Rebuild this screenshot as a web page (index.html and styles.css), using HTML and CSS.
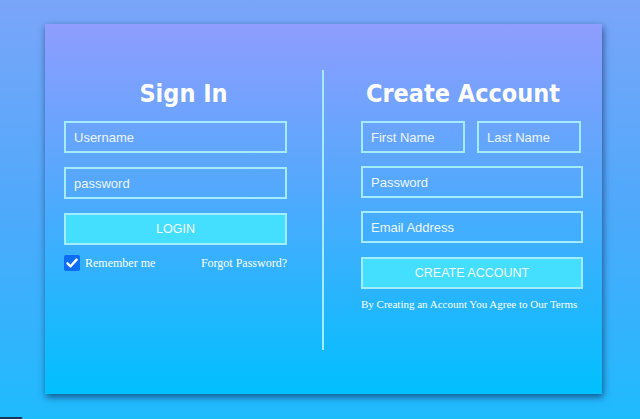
FILE: index.html
```html
<!DOCTYPE html>
<html lang="en">
<head>
<meta charset="utf-8">
<title>Sign In / Create Account</title>
<link rel="stylesheet" href="styles.css">
</head>
<body>
<div class="card">
  <section class="col col-left">
    <h2 class="title">Sign In</h2>
    <div class="form">
      <input class="field" type="text" placeholder="Username">
      <input class="field gap-l" type="password" placeholder="password">
      <button class="btn gap-l" type="button">LOGIN</button>
      <div class="row-opts">
        <label class="remember">
          <span class="check"><svg viewBox="0 0 16 16" width="16" height="16"><path d="M3.5 8.3 L6.6 11.3 L12.6 4.6" fill="none" stroke="#fff" stroke-width="2.4" stroke-linecap="round" stroke-linejoin="round"/></svg></span>
          <span>Remember me</span>
        </label>
        <span class="forgot">Forgot Password?</span>
      </div>
    </div>
  </section>
  <div class="divider"></div>
  <section class="col col-right">
    <h2 class="title">Create Account</h2>
    <div class="form">
      <div class="name-row">
        <input class="field" type="text" placeholder="First Name">
        <input class="field" type="text" placeholder="Last Name">
      </div>
      <input class="field gap-r" type="password" placeholder="Password">
      <input class="field gap-r" type="email" placeholder="Email Address">
      <button class="btn gap-rb" type="button">CREATE ACCOUNT</button>
      <p class="terms">By Creating an Account You Agree to Our Terms</p>
    </div>
  </section>
</div>
<div class="corner-bar"></div>
</body>
</html>
```

FILE: styles.css
```css
html, body {
  margin: 0;
  padding: 0;
}
body {
  width: 640px;
  height: 419px;
  overflow: hidden;
  background: linear-gradient(180deg, #7aa5f9 0%, #4fa9fb 50%, #1ebbfd 100%);
  font-family: "Liberation Sans", Arial, sans-serif;
}
.card {
  box-sizing: border-box;
  margin: 24px 0 0 45px;
  width: 557px;
  height: 370px;
  display: flex;
  align-items: flex-start;
  background: linear-gradient(180deg, #8f9dfe 0%, #52a9fd 45%, #00c0fe 100%);
  box-shadow: 1px 3px 7px rgba(10, 30, 80, 0.65);
}
.col {
  box-sizing: border-box;
  display: flex;
  flex-direction: column;
  padding-top: 54px;
}
.col-left { width: 277px; }
.col-right { width: 278px; }
.col-left .form { margin-left: 19px; width: 223px; }
.col-right .form { margin-left: 37px; width: 222px; }
.title {
  margin: 0 0 13px 0;
  height: 30px;
  line-height: 31px;
  text-align: center;
  color: #ffffff;
  font-family: "DejaVu Sans Condensed", "DejaVu Sans", sans-serif;
  font-weight: bold;
  font-size: 25px;
}
.field {
  box-sizing: border-box;
  display: block;
  width: 100%;
  height: 32px;
  margin: 0;
  padding: 0 0 0 8px;
  border: 2px solid #a4ecfb;
  background: transparent;
  color: #f2f8ff;
  font-family: "Liberation Sans", Arial, sans-serif;
  font-size: 13px;
  outline: none;
}
.field::placeholder {
  color: #eef6ff;
  opacity: 1;
}
.gap-l { margin-top: 14px; }
.gap-r { margin-top: 13px; }
.gap-rb { margin-top: 14px; }
.btn {
  box-sizing: border-box;
  display: block;
  width: 100%;
  height: 32px;
  padding: 0;
  border: 2px solid #a4ecfb;
  background: #44defe;
  color: #f4fbff;
  font-family: "Liberation Sans", Arial, sans-serif;
  font-size: 12.5px;
  cursor: pointer;
}
.row-opts {
  margin-top: 10px;
  display: flex;
  align-items: center;
  justify-content: space-between;
  font-family: "Liberation Serif", "Times New Roman", serif;
  font-size: 12px;
  color: #ffffff;
}
.remember {
  display: flex;
  align-items: center;
  gap: 5px;
}
.check {
  display: block;
  width: 16px;
  height: 16px;
  border-radius: 2px;
  background: #0b6cf5;
}
.check svg { display: block; }
.divider {
  flex: none;
  width: 2px;
  height: 280px;
  margin-top: 46px;
  background: #a4ecfb;
}
.name-row {
  display: flex;
  gap: 12px;
  width: 220px;
}
.name-row .field {
  width: 104px;
}
.terms {
  margin: 9px 0 0 0;
  font-family: "Liberation Serif", "Times New Roman", serif;
  font-size: 11px;
  color: #ffffff;
  white-space: nowrap;
}
.corner-bar {
  position: fixed;
  left: 0;
  bottom: 0;
  width: 22px;
  height: 2px;
  background: #16365a;
}
```
